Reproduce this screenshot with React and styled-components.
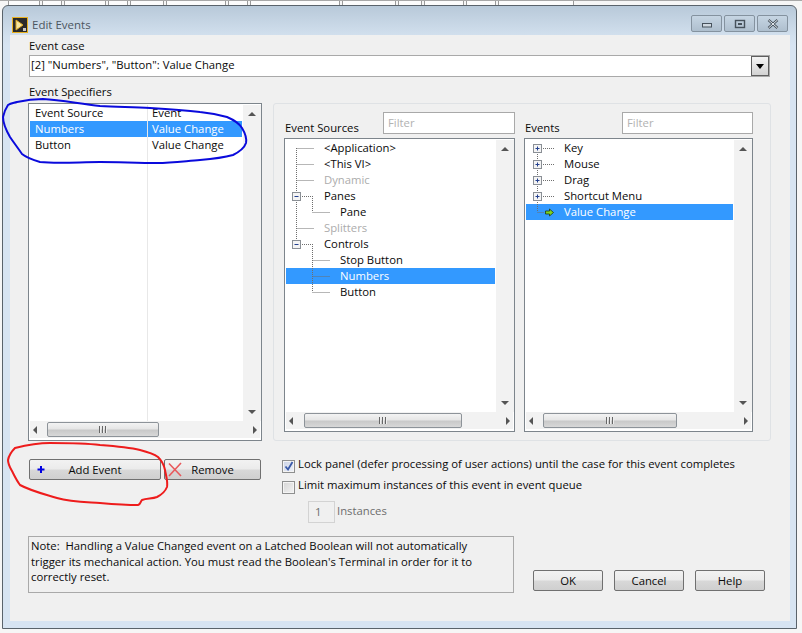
import React from 'react'
import styled, { createGlobalStyle } from 'styled-components'

const Global = createGlobalStyle`
html, body { margin: 0; padding: 0; background: #f6f6f6; }
body { font-family: "Open Sans", "Noto Sans", sans-serif; font-size: 11.3px; color: #0a0a0a; }
* { box-sizing: border-box; }
`

const Page = styled.div`
width: 802px;
height: 633px;
position: relative;
overflow: hidden;
`

const BehindStrip = styled.div`
height: 5px;
display: flex;
gap: 2px;
padding-left: 8px;
border-top: 1px solid #a8a8a8;
`

const BehindCell = styled.span`
width: ${props => props.$w}px;
height: 4px;
border-left: 1px solid #9a9a9a;
border-right: 1px solid #9a9a9a;
background: #fcfcfc;
`

const Window = styled.div`
margin-left: 2px;
width: 795px;
height: 624px;
border: 1px solid #5a636b;
border-radius: 6px 6px 0 0;
padding: 0 6px 7px 7px;
background: linear-gradient(#b8c9d9 0, #d2e0ee 30px, #d7e4f2 40px);
`

const TitleBar = styled.div`
height: 29px;
display: flex;
align-items: center;
padding: 8px 2px 0 2px;
`

const Caption = styled.span`
margin-left: 4px;
flex: 1;
color: #4c5660;
font-size: 11.5px;
`

const WinButtons = styled.div`
display: flex;
gap: 2px;
align-self: flex-start;
margin-top: 1px;
`

const WinButton = styled.div`
width: 31px;
height: 17px;
border: 1px solid #84929f;
border-radius: 2px;
display: flex;
align-items: center;
justify-content: center;
background: linear-gradient(#c6d5e3, #aebfce);
`

const Client = styled.div`
width: 780px;
height: 586px;
background: #f0f0f0;
padding: 3px 0 0 19px;
`

const Label = styled.div`
height: 16px;
line-height: 16px;
margin-top: ${props => props.$top || 0}px;
margin-bottom: ${props => props.$bottom || 0}px;
`

const Combo = styled.div`
width: 741px;
height: 22px;
border: 1px solid #a9a9a9;
background: #fff;
display: flex;
align-items: center;
justify-content: space-between;
padding-left: 1px;
span { margin-bottom: 3px; }
`

const ComboArrow = styled.div`
width: 18px;
height: 20px;
border: 1px solid #5f5f5f;
background: linear-gradient(#f4f4f4, #d2d2d2);
display: flex;
align-items: center;
justify-content: center;
`

const Main = styled.div`
display: flex;
gap: 11px;
margin: 3px 0 0 -1px;
`

const ListBox = styled.div`
width: ${props => props.$w}px;
height: ${props => props.$h}px;
border: 1px solid #7d858c;
background: #fff;
display: flex;
flex-direction: column;
`

const ListBody = styled.div`
flex: 1;
display: flex;
min-height: 0;
`

const ListRows = styled.div`
flex: 1;
padding: ${props => props.$top}px 1px 0;
position: relative;
`

const ColumnRule = styled.div`
position: absolute;
top: 1px;
bottom: 0;
left: 118px;
width: 1px;
background: #e8e8e8;
`

const VBar = styled.div`
width: 18px;
background: #f2f2f2;
display: flex;
flex-direction: column;
align-items: center;
justify-content: space-between;
padding: 7px 0;
margin-top: 1px;
`

const HBar = styled.div`
height: 17px;
margin: 0 1px 2px;
background: #f2f2f2;
display: flex;
align-items: center;
padding: 0 3px;
`

const HThumb = styled.div`
width: ${props => props.$w}px;
height: 15px;
margin: 0 auto 0 ${props => props.$left}px;
border: 1px solid #8d9399;
border-radius: 2px;
background: linear-gradient(#f3f3f3, #e6e6e6 45%, #c9c9c9 55%, #d8d8d8);
display: flex;
align-items: center;
justify-content: center;
gap: 1px;
`

const Grip = styled.i`
width: 1px;
height: 7px;
background: #666;
box-shadow: 1px 0 0 #eee;
margin-right: 1px;
`

const SpecRow = styled.div`
display: grid;
grid-template-columns: 117px 1fr;
height: 16px;
line-height: 15px;
background: ${props => (props.$sel ? '#3399ff' : 'transparent')};
color: ${props => (props.$sel ? '#fff' : 'inherit')};
span:first-child { padding-left: 5px; }
span:last-child { padding-left: 4px; border-left: 1px solid ${props => (props.$sel ? '#fff' : 'transparent')}; }
`

const RightPanel = styled.div`
width: 498px;
height: 338px;
border: 1px solid #dfe2e5;
border-radius: 3px;
padding: 8px 17px 0 10px;
display: grid;
grid-template-columns: 231px 229px;
column-gap: 9px;
align-content: start;
`

const PaneHead = styled.div`
display: flex;
justify-content: space-between;
align-items: flex-end;
height: 22px;
margin-bottom: 4px;
span { line-height: 16px; margin-bottom: -2px; padding-left: 1px; }
`

const Filter = styled.div`
width: ${props => props.$w}px;
height: 22px;
border: 1px solid #a9a9a9;
background: #fff;
color: #b2b2b2;
line-height: 19px;
padding-left: 4px;
`

const TreeRow = styled.div`
display: flex;
height: 16px;
line-height: 15px;
background: ${props => (props.$sel ? '#3399ff' : 'transparent')};
color: ${props => (props.$sel ? '#fff' : props.$off ? '#acacac' : 'inherit')};
`

const Gutter = styled.svg`
flex: none;
display: block;
`

const Bottom = styled.div`
display: flex;
margin-top: 18px;
height: 64px;
`

const BtnGroup = styled.div`
display: flex;
gap: 3px;
align-items: flex-start;
`

const Btn = styled.button`
width: ${props => props.$w}px;
height: 21px;
padding: 0 0 1px;
border: 1px solid #707070;
border-radius: 2px;
font: inherit;
color: inherit;
background: linear-gradient(#f2f2f2, #ebebeb 48%, #d8d8d8 52%, #cfcfcf);
position: relative;
display: flex;
align-items: center;
justify-content: center;
svg { position: absolute; left: ${props => props.$iconLeft || 0}px; top: 2px; }
`

const Options = styled.div`
margin-left: 21px;
`

const OptionRow = styled.div`
display: flex;
align-items: center;
gap: 3px;
height: 16px;
margin-bottom: 6px;
margin-top: -1px;
line-height: 16px;
span { margin-bottom: 5px; }
`

const CheckBox = styled.div`
width: 13px;
height: 13px;
border: 1px solid #8e8f8f;
background: ${props => (props.$on ? 'linear-gradient(135deg, #cbd3e6, #eef1f8)' : 'linear-gradient(135deg, #d6d6d6, #f2f2f2)')};
box-shadow: inset 0 0 0 1px #f4f4f4;
display: flex;
align-items: center;
justify-content: center;
`

const InstanceRow = styled.div`
display: flex;
align-items: center;
gap: 2px;
margin: 4px 0 0 26px;
color: #6d6d6d;
span { margin-bottom: 3px; }
`

const InstanceBox = styled.div`
width: 27px;
height: 22px;
border: 1px solid #d3d3d3;
line-height: 19px;
padding-left: 6px;
`

const Footer = styled.div`
display: flex;
margin: 13px 0 0 -1px;
`

const Note = styled.div`
width: 486px;
height: 57px;
border: 1px solid #a9a9a9;
padding: 1px 0 0 2px;
line-height: 15.5px;
white-space: pre;
`

const DialogButtons = styled.div`
display: flex;
gap: 11px;
margin: 34px 0 0 19px;
`

const Scribble = styled.svg`
position: absolute;
left: 0;
top: 0;
pointer-events: none;
`

const Tri = ({ dir }) => {
  const d = { up: 'M0 4L4 0L8 4Z', down: 'M0 0H8L4 4Z', left: 'M4 0V8L0 4Z', right: 'M0 0V8L4 4Z' }[dir]
  const flat = dir === 'up' || dir === 'down'
  return (
    <svg width={flat ? 8 : 4} height={flat ? 4 : 8} style={{ display: 'block' }}>
      <path d={d} fill="#555" />
    </svg>
  )
}

const Scroller = ({ thumb, left }) => (
  <HBar>
    <Tri dir="left" />
    <HThumb $w={thumb} $left={left}>
      <Grip /><Grip /><Grip />
    </HThumb>
    <Tri dir="right" />
  </HBar>
)

const VScroll = () => (
  <VBar>
    <Tri dir="up" />
    <Tri dir="down" />
  </VBar>
)

const dots = { stroke: '#6e6e6e', strokeDasharray: '1 1', fill: 'none' }

// one row of tree connector lines, x = root line
const TreeGutter = ({ width, x, hTo, from, to, childFrom, childTo, box, arrow }) => (
  <Gutter width={width} height="16">
    {from !== undefined && <path d={`M${x} ${from}V${to}`} {...dots} />}
    {childFrom !== undefined && <path d={`M${x + 16} ${childFrom}V${childTo}`} {...dots} />}
    {hTo && <path d={`M${hTo[0]} 8.5H${hTo[1]}`} {...dots} />}
    {box && (
      <g>
        <rect x={x - 4} y="4.5" width="8" height="8" fill="#f4f4f4" stroke="#8a8f95" />
        <path d={`M${x - 2} 8.5H${x + 2}`} stroke="#23408f" />
        {box === 'plus' && <path d={`M${x} 6.5V10.5`} stroke="#23408f" />}
      </g>
    )}
    {arrow && (
      <path d={`M${x + 8} 7H${x + 12}V5L${x + 16} 8.5L${x + 12} 12V10H${x + 8}Z`} fill="#7ed321" stroke="#1d3a12" strokeWidth="0.8" />
    )}
  </Gutter>
)

const sources = [
  { name: '<Application>', from: 8, to: 16, hTo: [10.5, 28] },
  { name: '<This VI>', from: 0, to: 16, hTo: [10.5, 28] },
  { name: 'Dynamic', off: true, from: 0, to: 16, hTo: [10.5, 28] },
  { name: 'Panes', from: 0, to: 16, hTo: [14, 28], box: 'minus', childFrom: 8, childTo: 16 },
  { name: 'Pane', indent: true, from: 0, to: 16, childFrom: 0, childTo: 8, hTo: [26.5, 44] },
  { name: 'Splitters', off: true, from: 0, to: 16, hTo: [10.5, 28] },
  { name: 'Controls', from: 0, to: 8, hTo: [14, 28], box: 'minus', childFrom: 8, childTo: 16 },
  { name: 'Stop Button', indent: true, childFrom: 0, childTo: 16, hTo: [26.5, 44] },
  { name: 'Numbers', indent: true, sel: true, childFrom: 0, childTo: 16, hTo: [26.5, 44] },
  { name: 'Button', indent: true, childFrom: 0, childTo: 8, hTo: [26.5, 44] },
]

const events = [
  { name: 'Key', from: 8, to: 16 },
  { name: 'Mouse', from: 0, to: 16 },
  { name: 'Drag', from: 0, to: 16 },
  { name: 'Shortcut Menu', from: 0, to: 16 },
]

const noteText = `Note:  Handling a Value Changed event on a Latched Boolean will not automatically
trigger its mechanical action. You must read the Boolean's Terminal in order for it to
correctly reset.`

const App = () => (
  <Page>
    <Global />
    <BehindStrip>
      {[32, 20, 42, 20, 34, 60, 20, 90, 54, 24, 40, 30, 76].map((w, i) => <BehindCell key={i} $w={w} />)}
    </BehindStrip>
    <Window>
      <TitleBar>
        <svg width="16" height="16">
          <rect x="0.5" y="0.5" width="15" height="15" fill="#2a2a2a" stroke="#e8b020" />
          <path d="M4 3L11 8L4 13Z" fill="#f5e6a0" stroke="#d9a520" />
          <path d="M11 11h3v3h-3z" fill="#c9c9c9" />
        </svg>
        <Caption>Edit Events</Caption>
        <WinButtons>
          <WinButton>
            <svg width="12" height="8"><rect x="1.5" y="3.5" width="9" height="3.5" fill="#cfd8e0" stroke="#47525c" /></svg>
          </WinButton>
          <WinButton>
            <svg width="12" height="10"><rect x="1.5" y="1.5" width="9" height="7" fill="none" stroke="#47525c" strokeWidth="1.4" /><rect x="4" y="4" width="4" height="2" fill="#47525c" /></svg>
          </WinButton>
          <WinButton>
            <svg width="12" height="10"><path d="M1.5 1L10.5 9M10.5 1L1.5 9" stroke="#47525c" strokeWidth="2.4" /><path d="M1.5 1L10.5 9M10.5 1L1.5 9" stroke="#e8eef3" strokeWidth="1" /></svg>
          </WinButton>
        </WinButtons>
      </TitleBar>
      <Client>
        <Label $bottom={1}>Event case</Label>
        <Combo>
          <span>[2] "Numbers", "Button": Value Change</span>
          <ComboArrow>
            <svg width="8" height="5"><path d="M0 0H8L4 5Z" fill="#000" /></svg>
          </ComboArrow>
        </Combo>
        <Label $top={7}>Event Specifiers</Label>
        <Main>
          <ListBox $w={234} $h={338}>
            <ListBody>
              <ListRows $top={1}>
                <ColumnRule />
                <SpecRow>
                  <span>Event Source</span>
                  <span>Event</span>
                </SpecRow>
                <SpecRow $sel>
                  <span>Numbers</span>
                  <span>Value Change</span>
                </SpecRow>
                <SpecRow>
                  <span>Button</span>
                  <span>Value Change</span>
                </SpecRow>
              </ListRows>
              <VScroll />
            </ListBody>
            <Scroller thumb={112} left={10} />
          </ListBox>
          <RightPanel>
            <div>
              <PaneHead>
                <span>Event Sources</span>
                <Filter $w={132}>Filter</Filter>
              </PaneHead>
              <ListBox $w={231} $h={294}>
                <ListBody>
                  <ListRows $top={1}>
                    {sources.map(s => (
                      <TreeRow key={s.name} $sel={s.sel} $off={s.off}>
                        <TreeGutter
                          width={s.indent ? 54 : 38}
                          x={10.5}
                          hTo={s.hTo}
                          from={s.from}
                          to={s.to}
                          childFrom={s.childFrom}
                          childTo={s.childTo}
                          box={s.box}
                        />
                        <span>{s.name}</span>
                      </TreeRow>
                    ))}
                  </ListRows>
                  <VScroll />
                </ListBody>
                <Scroller thumb={158} left={11} />
              </ListBox>
            </div>
            <div>
              <PaneHead>
                <span>Events</span>
                <Filter $w={131}>Filter</Filter>
              </PaneHead>
              <ListBox $w={229} $h={294}>
                <ListBody>
                  <ListRows $top={1}>
                    {events.map(e => (
                      <TreeRow key={e.name}>
                        <TreeGutter width={38} x={11.5} from={e.from} to={e.to} hTo={[15, 29]} box="plus" />
                        <span>{e.name}</span>
                      </TreeRow>
                    ))}
                    <TreeRow $sel>
                      <TreeGutter width={38} x={11.5} from={0} to={8} hTo={[11.5, 18]} arrow />
                      <span>Value Change</span>
                    </TreeRow>
                  </ListRows>
                  <VScroll />
                </ListBody>
                <Scroller thumb={134} left={10} />
              </ListBox>
            </div>
          </RightPanel>
        </Main>
        <Bottom>
          <BtnGroup>
            <Btn $w={132} $iconLeft={6}>
              <svg width="10" height="15"><path d="M5 4V11M1.5 7.5H8.5" stroke="#0000e0" strokeWidth="2" /></svg>
              <span>Add Event</span>
            </Btn>
            <Btn $w={97} $iconLeft={3}>
              <svg width="14" height="15"><path d="M1 1.5L13 14M13 1L1 14" stroke="#e8595c" strokeWidth="1.6" /></svg>
              <span>Remove</span>
            </Btn>
          </BtnGroup>
          <Options>
            <OptionRow>
              <CheckBox $on>
                <svg width="10" height="10"><path d="M1.5 5.5L4 8.5L8.5 1" fill="none" stroke="#3a5aa8" strokeWidth="1.8" /></svg>
              </CheckBox>
              <span>Lock panel (defer processing of user actions) until the case for this event completes</span>
            </OptionRow>
            <OptionRow>
              <CheckBox />
              <span>Limit maximum instances of this event in event queue</span>
            </OptionRow>
            <InstanceRow>
              <InstanceBox>1</InstanceBox>
              <span>Instances</span>
            </InstanceRow>
          </Options>
        </Bottom>
        <Footer>
          <Note>{noteText}</Note>
          <DialogButtons>
            <Btn $w={70}>OK</Btn>
            <Btn $w={70}>Cancel</Btn>
            <Btn $w={70}>Help</Btn>
          </DialogButtons>
        </Footer>
      </Client>
    </Window>
    <Scribble width="802" height="633">
      <path
        d="M17 102C26 100 34 99 43 99C62 100 80 104 100 106C118 107 134 107 150 108C168 109 184 110 200 112C210 113 220 115 227 117C234 120 239 123 242 128C245 133 247 138 246 143C244 149 239 152 233 155C222 158 212 159 200 160C186 161 172 163 157 163C138 163 118 162 100 162C80 162 58 164 40 162C33 160 27 158 22 154C18 148 14 143 10 137C6 130 3 124 3 117C4 112 6 108 8 105C11 103 14 103 17 102Z"
        fill="none"
        stroke="#0a0adc"
        strokeWidth="2"
      />
      <path
        d="M15 448C27 445 38 443 50 443C67 443 84 443 100 445C114 446 128 447 140 450C148 452 154 454 158 457C162 461 164 465 165 470C166 476 168 481 167 487C165 492 161 495 157 497C152 499 147 498 142 500C140 502 141 504 138 505C125 505 112 504 100 503C86 502 71 502 57 498C44 494 31 491 20 485C17 481 15 477 13 473C11 469 8 465 8 460C9 455 12 451 15 448Z"
        fill="none"
        stroke="#ee1c1c"
        strokeWidth="2"
      />
    </Scribble>
  </Page>
)

export default App
